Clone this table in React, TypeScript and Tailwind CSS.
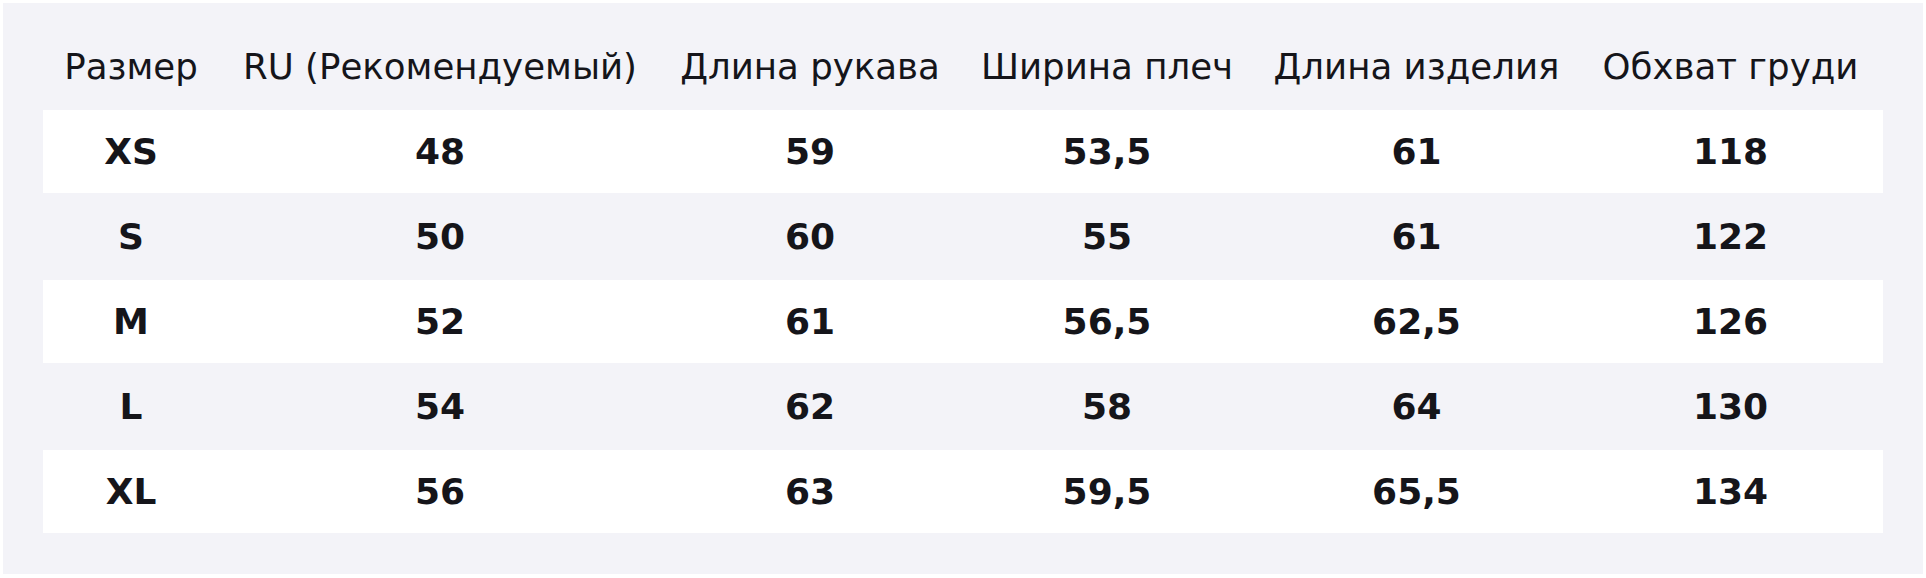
const headers = ['Размер', 'RU (Рекомендуемый)', 'Длина рукава', 'Ширина плеч', 'Длина изделия', 'Обхват груди'];

const rows = [
  ['XS', '48', '59', '53,5', '61', '118'],
  ['S', '50', '60', '55', '61', '122'],
  ['M', '52', '61', '56,5', '62,5', '126'],
  ['L', '54', '62', '58', '64', '130'],
  ['XL', '56', '63', '59,5', '65,5', '134'],
];

const cols = 'grid grid-cols-[176px_442px_298px_296px_323px_1fr]';

const App = () => {
  return (
    <div className="w-full bg-white p-[3px] font-['DejaVu_Sans',sans-serif] text-[#15151a]">
      <div className="bg-[#f3f3f8] px-[40px] pt-[20px] pb-[41px]">
        <div className={`${cols} h-[87px] items-center text-[35.6px]`}>
          {headers.map((h) => (
            <div key={h} className="text-center whitespace-nowrap">{h}</div>
          ))}
        </div>
        {rows.map((row, i) => (
          <div
            key={row[0]}
            className={`${cols} items-center text-[36px] font-bold ${i % 2 === 0 ? 'bg-white h-[83px]' : 'h-[87px]'}`}
          >
            {row.map((cell, j) => (
              <div key={j} className="text-center">{cell}</div>
            ))}
          </div>
        ))}
      </div>
    </div>
  );
};

export default App;
